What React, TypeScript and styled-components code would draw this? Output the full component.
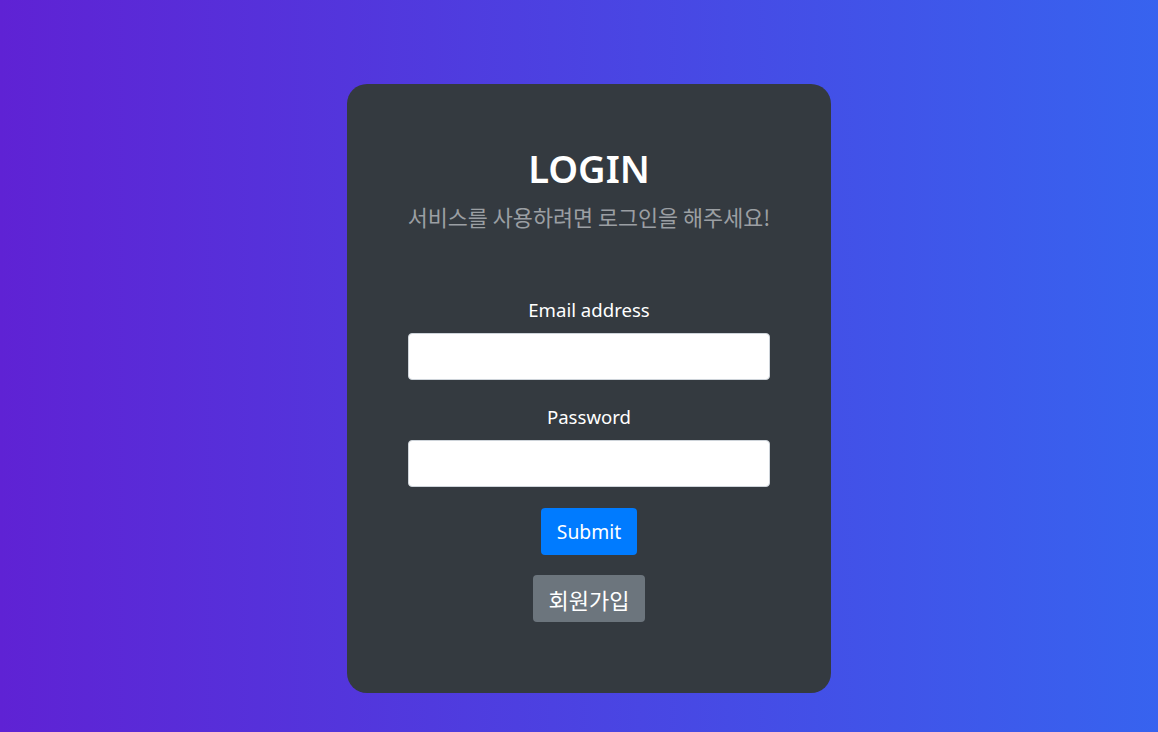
import React from "react";
import styled, { createGlobalStyle } from "styled-components";

const Global = createGlobalStyle`
  html, body { margin: 0; padding: 0; height: 100%; }
  body {
    font-family: "Noto Sans", "Noto Sans CJK KR", sans-serif;
    background: linear-gradient(to right, #5f22d4, #3763ef);
    min-height: 732px;
  }
`;

const Page = styled.div`
  display: flex;
  justify-content: center;
  align-items: flex-start;
  padding: 84px 0 0 20px;
  box-sizing: border-box;
  min-height: 732px;
`;

const Card = styled.div`
  width: 484px;
  height: 609px;
  box-sizing: border-box;
  background: #343a40;
  border-radius: 20px;
  padding: 60px 61px 0;
  display: flex;
  flex-direction: column;
  align-items: center;
  text-align: center;
`;

const Title = styled.h1`
  margin: 0;
  font-size: 38px;
  font-weight: 600;
  line-height: 48px;
  color: #ffffff;
`;

const Subtitle = styled.p`
  margin: 11px 0 0;
  font-family: "Noto Sans CJK KR", sans-serif;
  font-size: 21.8px;
  line-height: 28px;
  color: #9b9fa3;
  white-space: nowrap;
`;

const Form = styled.form`
  width: 100%;
  margin-top: 65px;
  display: flex;
  flex-direction: column;
  align-items: center;
`;

const Label = styled.label`
  font-size: 18.6px;
  line-height: 25px;
  color: #ffffff;
  margin-bottom: 11px;
  padding-top: 1px;
`;

const Input = styled.input<{ $gap?: number }>`
  width: 100%;
  height: 47px;
  box-sizing: border-box;
  border: 1px solid #ced4da;
  border-radius: 4px;
  background: #fff;
  margin-bottom: ${(p) => p.$gap ?? 23}px;
  font-size: 18px;
  padding: 0 12px;
`;

const Button = styled.button<{ $variant: "primary" | "secondary" }>`
  height: 47px;
  padding: 0 16px;
  border: none;
  border-radius: 4px;
  color: #fff;
  font-family: "Noto Sans", "Noto Sans CJK KR", sans-serif;
  font-size: ${(p) => (p.$variant === "primary" ? 19.3 : 22)}px;
  background: ${(p) => (p.$variant === "primary" ? "#007bff" : "#6c757d")};
  margin-top: ${(p) => (p.$variant === "primary" ? 0 : 20)}px;
  cursor: pointer;
`;

export default function App() {
  return (
    <>
      <Global />
      <Page>
        <Card>
          <Title>LOGIN</Title>
          <Subtitle>서비스를 사용하려면 로그인을 해주세요!</Subtitle>
          <Form onSubmit={(e) => e.preventDefault()}>
            <Label htmlFor="email">Email address</Label>
            <Input id="email" type="email" />
            <Label htmlFor="password">Password</Label>
            <Input id="password" type="password" $gap={21} />
            <Button type="submit" $variant="primary">Submit</Button>
            <Button type="button" $variant="secondary">회원가입</Button>
          </Form>
        </Card>
      </Page>
    </>
  );
}
